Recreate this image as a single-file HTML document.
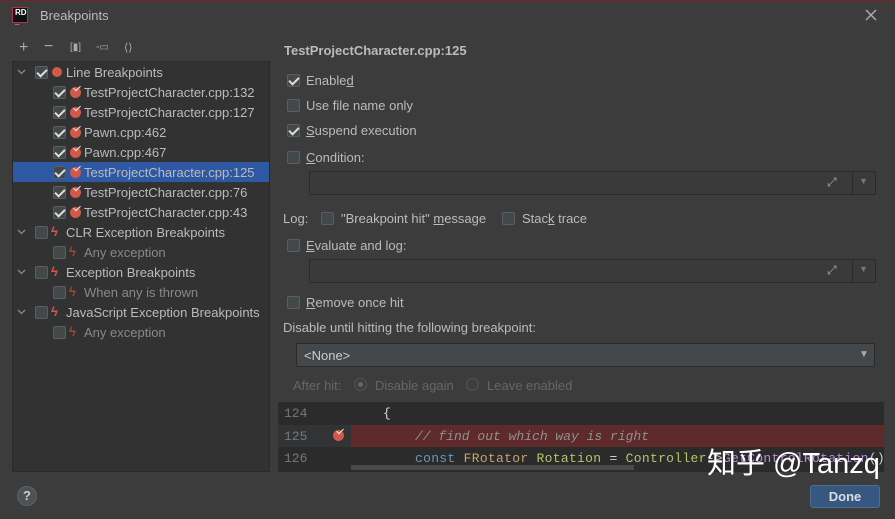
<!DOCTYPE html><html><head><meta charset="utf-8"><style>
*{margin:0;padding:0;box-sizing:border-box}
body{width:895px;height:519px;background:#3c3c3c;font-family:"Liberation Sans","Noto Sans CJK SC",sans-serif;font-size:13px;color:#bbb;position:relative;overflow:hidden}
.a{position:absolute;white-space:nowrap}
.cb{position:absolute;width:13px;height:13px;background:#43494a;border:1px solid #5a5e60;border-radius:2px}
.cb.on::after{content:"";position:absolute;left:3px;top:0px;width:4px;height:8px;border:solid #ddd;border-width:0 2px 2px 0;transform:rotate(45deg)}
.bp{position:absolute;width:11px;height:11px;border-radius:50%;background:#d0594a}
.bp.ck::after{content:"";position:absolute;left:5px;top:-3px;width:3px;height:6px;border:solid #eee;border-width:0 1.5px 1.5px 0;transform:rotate(45deg)}
.ex{position:absolute;color:#e0554a;font-size:13px;font-weight:bold}
.inp{position:absolute;background:#3a3a3a;border:1px solid #2a2a2a;border-radius:2px}
u{text-decoration:underline}
.mono{font-family:"Liberation Mono",monospace;font-size:13px}
</style></head><body>
<div class="a" style="left:0;top:0;width:895px;height:2px;background:#5a2e33"></div>
<div class="a" style="left:12px;top:7px;width:16px;height:16px;background:#111;border:1px solid #b03050;color:#fff;font-size:8px;font-weight:bold;line-height:9px;padding-left:2px">RD<br>_</div>
<div class="a" style="left:40px;top:8px;color:#bbb;font-size:13px">Breakpoints</div>
<svg class="a" style="left:865px;top:9px" width="12" height="12"><path d="M1 1L11 11M11 1L1 11" stroke="#aaa" stroke-width="1.5"/></svg>
<div class="a" style="left:19px;top:39px;font-size:16px;color:#aaa">+</div>
<div class="a" style="left:44px;top:38px;font-size:16px;color:#aaa">−</div>
<div class="a" style="left:70px;top:42px;font-size:10px;color:#aaa">[▮]</div>
<div class="a" style="left:96px;top:42px;font-size:10px;color:#aaa">◦▭</div>
<div class="a" style="left:124px;top:41px;font-size:11px;color:#aaa">⟨⟩</div>
<div class="a" style="left:12px;top:61px;width:258px;height:411px;background:#323232;border:1px solid #2a2a2a"></div>
<div class="a" style="left:13px;top:162px;width:256px;height:20px;background:#2f65ca;opacity:.75"></div>
<div id="tree"></div>
<script>
var rows=[[0,'Line Breakpoints',1,'dot'],[1,'TestProjectCharacter.cpp:132',1,'bp'],[1,'TestProjectCharacter.cpp:127',1,'bp'],[1,'Pawn.cpp:462',1,'bp'],[1,'Pawn.cpp:467',1,'bp'],[1,'TestProjectCharacter.cpp:125',1,'bp'],[1,'TestProjectCharacter.cpp:76',1,'bp'],[1,'TestProjectCharacter.cpp:43',1,'bp'],[0,'CLR Exception Breakpoints',0,'ex'],[1,'Any exception',0,'ex'],[0,'Exception Breakpoints',0,'ex'],[1,'When any is thrown',0,'ex'],[0,'JavaScript Exception Breakpoints',0,'ex'],[1,'Any exception',0,'ex']];
var h='';rows.forEach(function(r,i){var y=66+i*20;var x=r[0]?53:35;
if(!r[0])h+='<svg class="a" style="left:17px;top:'+(y+3)+'px" width="9" height="6"><path d="M1 1L4.5 4.5L8 1" stroke="#888" fill="none" stroke-width="1.3"/></svg>';
h+='<div class="cb'+(r[2]?' on':'')+'" style="left:'+x+'px;top:'+y+'px"></div>';
if(r[3]=='dot')h+='<div class="bp" style="left:52px;top:'+(y+1)+'px;width:10px;height:10px"></div>';
else if(r[3]=='bp')h+='<div class="bp ck" style="left:70px;top:'+(y+1)+'px"></div>';
else h+='<div class="ex" style="left:'+(x+16)+'px;top:'+(y-2)+'px;'+(r[0]?'opacity:.6':'')+'">ϟ</div>';
var col=r[0]&&!r[2]?'#888':'#bbb';
h+='<div class="a" style="left:'+(x+31)+'px;top:'+(y-1)+'px;color:'+col+'">'+r[1]+'</div>';});
document.getElementById('tree').innerHTML=h;
</script>
<div class="a" style="left:284px;top:43px;font-weight:bold;color:#bbb">TestProjectCharacter.cpp:125</div>
<div class="cb on" style="left:287px;top:74px"></div><div class="a" style="left:306px;top:73px">Enable<u>d</u></div>
<div class="cb" style="left:287px;top:99px"></div><div class="a" style="left:306px;top:98px">Use file name only</div>
<div class="cb on" style="left:287px;top:124px"></div><div class="a" style="left:306px;top:123px"><u>S</u>uspend execution</div>
<div class="cb" style="left:287px;top:151px"></div><div class="a" style="left:306px;top:150px"><u>C</u>ondition:</div>
<div class="inp" style="left:309px;top:171px;width:567px;height:24px"></div>
<div class="a" style="left:852px;top:172px;width:1px;height:22px;background:#2a2a2a"></div>
<div class="a" style="left:827px;top:175px;color:#aaa;font-size:12px">⤢</div>
<div class="a" style="left:859px;top:176px;color:#777;font-size:9px">▼</div>
<div class="a" style="left:283px;top:211px">Log:</div>
<div class="cb" style="left:321px;top:212px"></div><div class="a" style="left:341px;top:211px">"Breakpoint hit" <u>m</u>essage</div>
<div class="cb" style="left:502px;top:212px"></div><div class="a" style="left:522px;top:211px">Stac<u>k</u> trace</div>
<div class="cb" style="left:287px;top:239px"></div><div class="a" style="left:306px;top:238px"><u>E</u>valuate and log:</div>
<div class="inp" style="left:309px;top:259px;width:567px;height:24px"></div>
<div class="a" style="left:852px;top:260px;width:1px;height:22px;background:#2a2a2a"></div>
<div class="a" style="left:827px;top:263px;color:#aaa;font-size:12px">⤢</div>
<div class="a" style="left:859px;top:264px;color:#777;font-size:9px">▼</div>
<div class="cb" style="left:287px;top:296px"></div><div class="a" style="left:306px;top:295px"><u>R</u>emove once hit</div>
<div class="a" style="left:283px;top:320px">Disable until hitting the following breakpoint:</div>
<div class="a" style="left:296px;top:343px;width:579px;height:24px;background:#44484a;border:1px solid #2a2a2a;border-radius:2px"></div>
<div class="a" style="left:304px;top:348px;color:#ccc">&lt;None&gt;</div>
<div class="a" style="left:859px;top:349px;color:#aaa;font-size:10px">▼</div>
<div class="a" style="left:293px;top:378px;color:#666">After hit:</div>
<div class="a" style="left:354px;top:378px;width:13px;height:13px;border-radius:50%;border:1px solid #555;background:#3e3e3e"></div>
<div class="a" style="left:358px;top:382px;width:5px;height:5px;border-radius:50%;background:#666"></div>
<div class="a" style="left:375px;top:378px;color:#666">Disable again</div>
<div class="a" style="left:466px;top:378px;width:13px;height:13px;border-radius:50%;border:1px solid #555;background:#3e3e3e"></div>
<div class="a" style="left:487px;top:378px;color:#666">Leave enabled</div>
<div class="a" style="left:278px;top:402px;width:606px;height:70px;background:#2b2b2b"></div>
<div class="a" style="left:278px;top:425px;width:73px;height:22px;background:#313335"></div>
<div class="a" style="left:351px;top:425px;width:533px;height:22px;background:#5e2a2a"></div>
<div class="a mono" style="left:284px;top:406px;color:#777">124</div>
<div class="a mono" style="left:284px;top:429px;color:#777">125</div>
<div class="a mono" style="left:284px;top:451px;color:#777">126</div>
<div class="bp ck" style="left:333px;top:430px"></div>
<div class="a mono" style="left:383px;top:406px;color:#ddd">{</div>
<div class="a mono" style="left:415px;top:429px;color:#909090;font-style:italic">// find out which way is right</div>
<div class="a mono" style="left:415px;top:451px;color:#ccc;letter-spacing:0.3px"><span style="color:#6897bb">const</span> <span style="color:#c9a26d">FRotator</span> <span style="color:#b5c46a">Rotation</span> = <span style="color:#b5c46a">Controller</span>-&gt;<span style="color:#b68fd6">GetControlRotation</span>()</div>
<div class="a" style="left:351px;top:465px;width:283px;height:5px;background:#4a4a4a"></div>
<div class="a" style="left:17px;top:486px;width:20px;height:20px;border-radius:50%;background:#4e5254;border:1px solid #5e6264;color:#ccc;font-weight:bold;text-align:center;line-height:18px">?</div>
<div class="a" style="left:810px;top:485px;width:70px;height:23px;background:#365880;border:1px solid #4c708c;border-radius:3px;color:#ddd;font-weight:bold;text-align:center;line-height:21px">Done</div>
<div class="a" style="left:707px;top:440px;font-size:29px;color:#fff">知乎 @Tanzq</div>
</body></html>
